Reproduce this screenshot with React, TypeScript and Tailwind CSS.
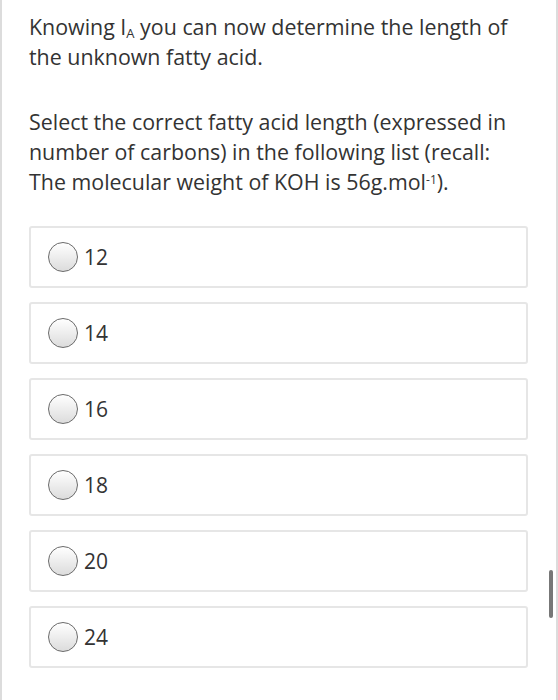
const options = ["12", "14", "16", "18", "20", "24"];

export default function App() {
  return (
    <div
      className="relative h-[700px] w-[558px] overflow-hidden border-x-2 border-[#dcdcdc] bg-white text-[#333] pl-[27px] pr-[28px]"
      style={{ fontFamily: '"Open Sans", "Liberation Sans", sans-serif' }}
    >
      <p className="pt-[12px] text-[21.4px] leading-[30px]">
        Knowing I<sub className="text-[13px]">A</sub> you can now determine the length of the unknown fatty acid.
      </p>
      <p className="mt-[35px] text-[21.4px] leading-[30px]">
        Select the correct fatty acid length (expressed in number of carbons) in the following list (recall: The molecular weight of KOH is 56g.mol<sup className="text-[12px]">-1</sup>).
      </p>

      <div className="mt-[29px] flex flex-col gap-[14px]">
        {options.map((o) => (
          <div
            key={o}
            className="flex h-[62px] items-center gap-[6px] rounded-[3px] border-2 border-[#e6e6e6] pl-[17px]"
          >
            <span className="h-[30px] w-[30px] rounded-full border-[1.5px] border-[#6b6b6b] bg-gradient-to-b from-white to-[#dcdcdc]" />
            <span className="text-[21px] leading-none">{o}</span>
          </div>
        ))}
      </div>

      <div className="absolute right-[3px] top-[570px] h-[48px] w-[4px] rounded-full bg-[#777]" />
    </div>
  );
}
